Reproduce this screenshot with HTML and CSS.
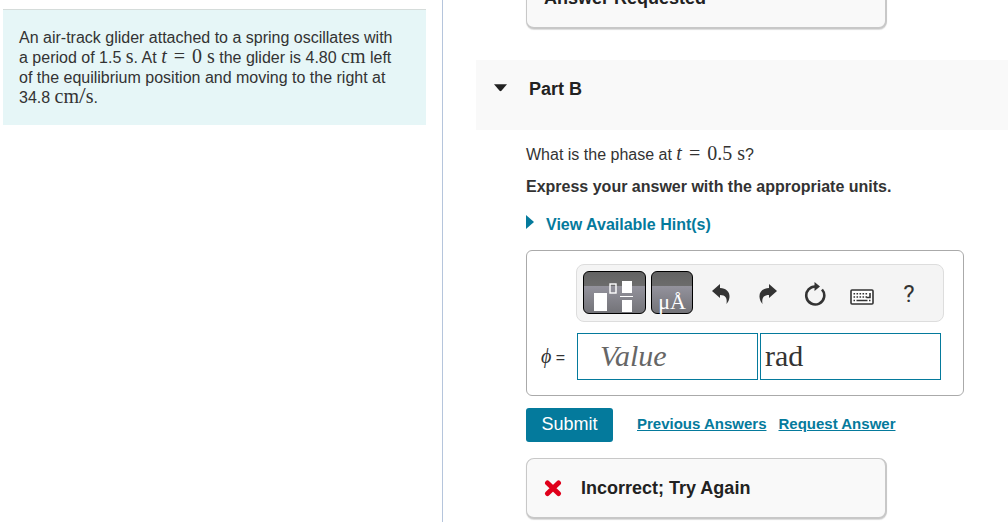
FILE: index.html
```html
<!DOCTYPE html>
<html lang="en">
  <head>
    <meta charset="utf-8">
    <title>Part B</title>
    <link rel="stylesheet" href="styles.css">
  </head>
  <body>
    <aside class="problem">
      <p class="problem-text">An air-track glider attached to a spring oscillates with a period of 1.5 <span class="math">s</span>. At <span class="math"><i>t</i><span class="rel">=</span>0 s</span> the glider is 4.80 <span class="math">cm</span> left of the equilibrium position and moving to the right at 34.8 <span class="math">cm<span class="slash">/</span>s</span>.</p>
    </aside>

    <main class="parts">
      <div class="card card-previous">Answer Requested</div>

      <h2 class="part-header">
        <svg class="caret" viewBox="0 0 14 8"><path d="M0 0H14L8 7Q7 8 6 7Z" fill="#222"/></svg>
        Part B
      </h2>

      <div class="part-body">
        <p class="question">What is the phase at <span class="math"><i>t</i><span class="rel">=</span>0.5 s</span>?</p>
        <p class="instructions">Express your answer with the appropriate units.</p>
        <a href="#" class="hints">
          <svg class="hint-arrow" viewBox="0 0 8 14"><path d="M0 0L8 7L0 14Z" fill="#047a9c"/></svg>
          View Available Hint(s)
        </a>

        <form class="answer" id="answer-form">
          <div class="toolbar">
            <button type="button" class="tool tool-templates" aria-label="Templates">
              <svg width="61" height="41" viewBox="0 0 61 41">
                <g fill="#fff">
                  <rect x="10" y="21" width="13" height="18"/>
                  <rect x="38" y="9" width="10" height="12"/>
                  <rect x="36" y="24" width="13" height="1"/>
                  <rect x="38" y="28" width="10" height="12"/>
                </g>
                <rect x="26" y="12" width="6" height="9" fill="none" stroke="#fff" stroke-width="1.4"/>
              </svg>
            </button>
            <button type="button" class="tool tool-units">μÅ</button>
            <button type="button" class="icon-btn" aria-label="Undo">
              <svg width="18" height="20" viewBox="0 0 18 20"><path d="M0 7L8 0V4C14 4 18 8 17.500 13C17.300 16 16 18 14.500 20C15.500 14 13.500 11 8 11V14Z" fill="#333"/></svg>
            </button>
            <button type="button" class="icon-btn" aria-label="Redo">
              <svg width="18" height="20" viewBox="0 0 18 20"><path d="M18 7L10 0V4C4 4 0 8 .5 13C.7 16 2 18 3.500 20C2.500 14 4.500 11 10 11V14Z" fill="#333"/></svg>
            </button>
            <button type="button" class="icon-btn" aria-label="Reset">
              <svg width="22" height="24" viewBox="0 0 22 24"><path d="M12 4.500A9 9 0 1 0 18 7.500" fill="none" stroke="#333" stroke-width="2.600"/><path d="M10.500 0L16 4.500L10.500 9Z" fill="#333"/></svg>
            </button>
            <button type="button" class="icon-btn" aria-label="Keyboard">
              <svg class="keyboard" width="24" height="16" viewBox="0 0 24 16">
                <rect x="1" y="1" width="22" height="14" rx="1" fill="#fff" stroke="#333" stroke-width="1.600"/>
                <path d="M3.500 4.800H18M3.500 8H17" fill="none" stroke="#333" stroke-width="1.600" stroke-dasharray="1.600 1.400"/>
                <path d="M20 4V8.500H16.500M3.500 11.500H5M6.500 11.500H17.500M19 11.500H20.500" fill="none" stroke="#333" stroke-width="1.600"/>
              </svg>
            </button>
            <button type="button" class="icon-btn help" aria-label="Help">?</button>
          </div>
          <div class="fields">
            <label for="value" class="symbol"><i>ϕ</i> =</label>
            <input id="value" class="field field-value" type="text" placeholder="Value">
            <input class="field" type="text" value="rad" aria-label="Units">
          </div>
        </form>

        <div class="actions">
          <button type="submit" form="answer-form" class="submit">Submit</button>
          <a href="#" class="action-link">Previous Answers</a>
          <a href="#" class="action-link">Request Answer</a>
        </div>

        <div class="card">
          <svg width="18" height="18" viewBox="0 0 18 18"><path d="M3.500 4L14.500 14.500M14.500 4L3.500 14.500" stroke="#e0001b" stroke-width="5" stroke-linecap="round"/></svg>
          Incorrect; Try Again
        </div>
      </div>
    </main>
  </body>
</html>
```

FILE: styles.css
```css
* {
  box-sizing: border-box;
}

body {
  display: flex;
  height: 100vh;
  margin: 0;
  overflow: hidden;
  background: #fff;
  color: #333;
  font: 16px/20px "Liberation Sans", Arial, sans-serif;
}

p, h2 {
  margin: 0;
}

/* left column */
.problem {
  width: 443px;
  flex-shrink: 0;
  padding: 9px 16px 0 3px;
  border-right: 1px solid #b5c5dc;
}

.problem-text {
  padding: 18px 24px 17px 16px;
  border-top: 1px solid #d5dcda;
  background: #e6f6f7;
}

.math {
  font-family: "Liberation Serif", "Times New Roman", serif;
  font-size: 20px;
  line-height: 0;
}

.rel {
  margin: 0 7px;
}

.slash {
  font-size: 24px;
}

/* right column */
.parts {
  flex: 1;
  overflow: hidden;
}

.card {
  display: flex;
  align-items: center;
  gap: 19px;
  width: 361px;
  max-width: 100%;
  height: 61px;
  padding: 0 17px;
  border: 1px solid #c8c8c8;
  border-right-width: 2px;
  border-bottom-width: 2px;
  border-radius: 8px;
  box-shadow: 0 1px 1px #ddd;
  background: #f9f9f9;
  color: #222;
  font-size: 18px;
  font-weight: bold;
}

/* scrolled partly out of view */
.card-previous {
  margin: -32px 0 31px 83px;
}

.part-header {
  display: flex;
  gap: 22px;
  margin-left: 33px;
  padding: 19px 18px 31px;
  background: #f9f9f9;
  color: #222;
  font-size: 18px;
  line-height: 20px;
}

.caret {
  width: 13px;
  height: 8px;
  margin-top: 5px;
}

.part-body {
  padding: 15px 44px 0 83px;
}

.instructions {
  margin-top: 12px;
  font-weight: bold;
}

.hints {
  display: flex;
  gap: 12px;
  margin-top: 18px;
  color: #047a9c;
  font-weight: bold;
  text-decoration: none;
}

.hint-arrow {
  width: 8px;
  height: 14px;
}

/* answer box */
.answer {
  margin: 15px 0 12px;
  padding: 13px 19px 15px 14px;
  border: 1px solid #aaa;
  border-radius: 6px;
}

.toolbar {
  display: flex;
  align-items: center;
  gap: 5px;
  height: 58px;
  margin-left: 35px;
  padding: 0 6px 2px;
  border: 1px solid #ddd;
  border-radius: 8px;
  background: #f4f4f4;
}

.tool {
  height: 43px;
  padding: 0;
  border: 1px solid #000;
  border-radius: 6px;
  background: linear-gradient(#626262, #6c6c6c 34%, #93929c 35%, #737378);
  color: #fff;
}

.tool-templates {
  width: 63px;
}

.tool svg {
  display: block;
}

.tool-units {
  width: 42px;
  margin-right: 2px;
  padding-top: 18px;
  font: 22px/24px "Liberation Serif", "Times New Roman", serif;
}

.icon-btn {
  display: flex;
  align-items: center;
  justify-content: center;
  width: 42px;
  height: 43px;
  padding: 4px 0 0;
  border: 0;
  background: none;
  color: #333;
}

.keyboard {
  margin-top: 5px;
}

.help {
  font: 24px/24px Roboto, sans-serif;
}

.fields {
  display: flex;
  align-items: center;
  gap: 2px;
  margin-top: 11px;
  padding-right: 3px;
}

.symbol {
  width: 34px;
  flex-shrink: 0;
}

.symbol i {
  font-family: "Liberation Serif", serif;
  font-size: 20px;
  line-height: 1;
}

.field {
  flex: 1;
  min-width: 0;
  height: 47px;
  padding: 0 4px 2px;
  border: 1px solid #047a9c;
  background: #fff;
  color: #333;
  font: 30px/32px "Liberation Serif", "Times New Roman", serif;
}

.field-value {
  text-indent: 18px;
}

.field::placeholder {
  color: #666;
  font-style: italic;
  opacity: 1;
}

/* submit row */
.actions {
  display: flex;
  align-items: center;
  gap: 12px;
  margin-bottom: 16px;
}

.submit {
  width: 87px;
  height: 34px;
  margin-right: 12px;
  padding: 0 0 2px;
  border: 0;
  border-radius: 3px;
  background: #047a9c;
  color: #fff;
  font: 18px/20px "Liberation Sans", Arial, sans-serif;
}

.action-link {
  padding-bottom: 2px;
  color: #047a9c;
  font-size: 15px;
  font-weight: bold;
}
```
